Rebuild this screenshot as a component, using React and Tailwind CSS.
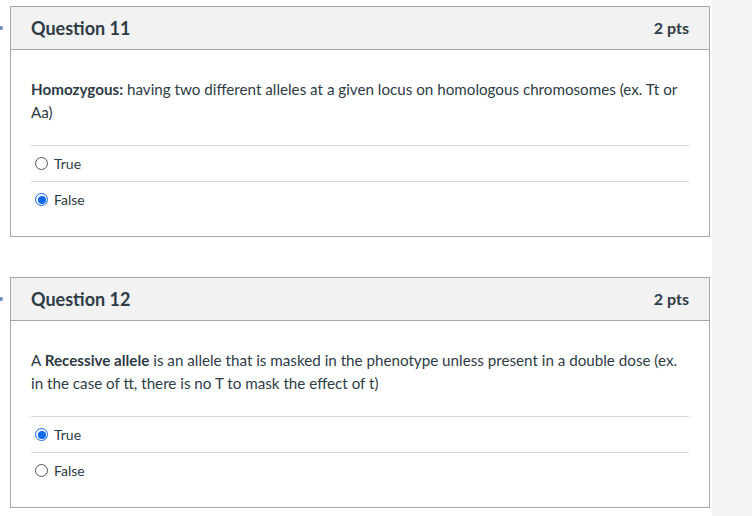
const QUESTIONS = [
  {
    id: 11,
    points: '2 pts',
    text: (
      <>
        <strong className="font-bold">Homozygous:</strong> having two different alleles at a given locus on homologous chromosomes (ex. Tt or Aa)
      </>
    ),
    answer: 'False',
  },
  {
    id: 12,
    points: '2 pts',
    text: (
      <>
        A <strong className="font-bold">Recessive allele</strong> is an allele that is masked in the phenotype unless present in a double dose (ex. in the case of tt, there is no T to mask the effect of t)
      </>
    ),
    answer: 'True',
  },
]

function Radio({ checked }) {
  if (checked) {
    return (
      <span className="w-[13px] h-[13px] rounded-full border-[1.5px] border-[#0e68e8] flex items-center justify-center shrink-0">
        <span className="w-[8px] h-[8px] rounded-full bg-[#0e68e8]" />
      </span>
    )
  }
  return <span className="w-[13px] h-[13px] rounded-full border border-[#555] bg-white shrink-0" />
}

function Question({ q }) {
  return (
    <div className="flex">
      {/* collapse marker */}
      <div className="w-[10px] h-[44px] flex items-center">
        <span className="w-[3px] h-[4px] rounded-r-full bg-[#6b8fb8]" />
      </div>

      <div className="w-[700px] border border-[#a5a5a5] bg-white">
        <div className="h-[43px] px-5 flex items-center justify-between bg-[#f2f2f2] border-b border-[#a5a5a5] text-[#2d3b45]">
          <h2 className="text-[18px] font-bold">Question {q.id}</h2>
          <span className="text-[16px] font-bold">{q.points}</span>
        </div>

        <div className="px-5 pt-[28px] pb-[19px]">
          <p className="text-[15.2px] leading-[23px] text-[#2d3b45] mb-[21px]">{q.text}</p>
          {['True', 'False'].map((opt) => (
            <div key={opt} className="h-[36px] border-t border-[#d9d9d9] flex items-center gap-[6px] pl-[4px]">
              <Radio checked={q.answer === opt} />
              <span className="text-[14px] text-[#2d3b45]">{opt}</span>
            </div>
          ))}
        </div>
      </div>
    </div>
  )
}

export default function App() {
  return (
    <div className="w-[752px] h-[516px] flex bg-white overflow-hidden font-['Lato',sans-serif]">
      <div className="w-[712px] pt-[6px] flex flex-col gap-[40px]">
        {QUESTIONS.map((q) => (
          <Question key={q.id} q={q} />
        ))}
      </div>
      <div className="flex-1 bg-[#f3f3f3]" />
    </div>
  )
}
